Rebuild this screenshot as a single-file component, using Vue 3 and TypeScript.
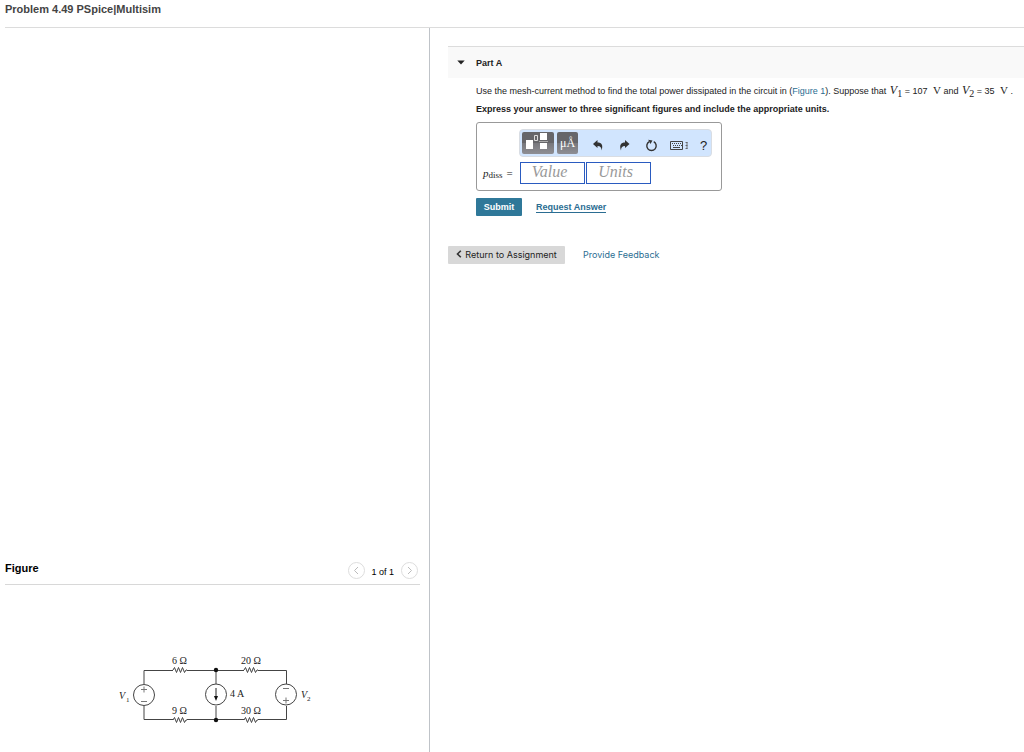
<script setup lang="ts">
import { ref } from 'vue'

interface Label {
  text: string
  x: number
  y: number
}

interface Point {
  x: number
  y: number
}

const open = ref(true)
const value = ref('')
const units = ref('')

const labels: Label[] = [
  { text: '6 Ω', x: 62, y: 19 },
  { text: '20 Ω', x: 131, y: 19 },
  { text: '9 Ω', x: 62, y: 69 },
  { text: '30 Ω', x: 131, y: 69 },
  { text: '4 A', x: 120, y: 52 },
]

const resistors: Point[] = [
  { x: 63, y: 25 },
  { x: 134, y: 25 },
  { x: 63, y: 75 },
  { x: 134, y: 75 },
]

const nodes: Point[] = [
  { x: 106, y: 25 },
  { x: 106, y: 75 },
]
</script>

<template>
  <div class="page">
    <header class="top">
      <h1>Problem 4.49 PSpice|Multisim</h1>
    </header>
    <div class="columns">
      <aside class="left">
        <div class="figure-head">
          <h2>Figure</h2>
          <div class="pager">
            <button type="button" class="round" aria-label="Previous figure">
              <svg width="17" height="17" viewBox="0 0 17 17"><circle cx="8.5" cy="8.5" r="8" /><path d="M10 5 6.5 8.5 10 12" /></svg>
            </button>
            <span>1 of 1</span>
            <button type="button" class="round" aria-label="Next figure">
              <svg width="17" height="17" viewBox="0 0 17 17"><circle cx="8.5" cy="8.5" r="8" /><path d="M7 5 10.5 8.5 7 12" /></svg>
            </button>
          </div>
        </div>
        <div class="figure-body">
          <svg class="circuit" width="210" height="85" viewBox="0 0 210 85" role="img" aria-label="Circuit diagram">
            <path class="wire" d="M34 39V25.5H63M77 25.5H134M148 25.5H176.5V39M34 61V74.5H63M77 74.5H134M148 74.5H176.5V61M106 25.5V39M106 61V74.5" />
            <path
              v-for="r in resistors"
              :key="`${r.x}-${r.y}`"
              class="wire"
              :transform="`translate(${r.x} ${r.y})`"
              d="M0 0 1.5-2.5 3.5 2.5 5.5-2.5 7.5 2.5 9.5-2.5 11.5 2.5 13 0H14"
            />
            <circle v-for="n in nodes" :key="n.y" :cx="n.x" :cy="n.y" r="2.2" class="node" />
            <circle cx="34" cy="50" r="10.5" class="source" />
            <circle cx="106" cy="49.5" r="10.5" class="source" />
            <circle cx="176" cy="49.5" r="10.5" class="source" />
            <path class="sign" d="M31 44.5H37M34 41.5V47.5M31 56.5H37M173 43.5H179M173 55.5H179M176 52.5V58.5" />
            <path class="sign dark" d="M106 43V53" />
            <path class="node" d="M104 51H108L106 56Z" />
            <text v-for="l in labels" :key="l.text" :x="l.x" :y="l.y">{{ l.text }}</text>
            <text x="9" y="54" class="var">V</text>
            <text x="16" y="57" class="sub">1</text>
            <text x="191" y="53" class="var">V</text>
            <text x="197" y="56" class="sub">2</text>
          </svg>
        </div>
      </aside>

      <main class="right">
        <div class="part-head">
          <button type="button" class="caret" aria-label="Toggle Part A" :aria-expanded="open" @click="open = !open">
            <svg width="8" height="5" viewBox="0 0 8 5"><path d="M.3 .5H7.7L4 4.500Z" fill="#222" /></svg>
          </button>
          <h2>Part A</h2>
        </div>
        <section v-if="open" class="part">
          <p class="question">
            Use the mesh-current method to find the total power dissipated in the circuit in (<a href="#">Figure 1</a>). Suppose that
            <span class="math">V<sub>1</sub></span> = 107 <span class="unit">V</span> and
            <span class="math">V<sub>2</sub></span> = 35 <span class="unit">V</span> .
          </p>
          <p class="instruction">Express your answer to three significant figures and include the appropriate units.</p>

          <form class="answer" @submit.prevent>
            <div class="box">
              <div class="toolbar">
                <button type="button" class="tool wide" aria-label="Templates">
                  <svg width="32" height="22" viewBox="0 0 32 22">
                    <path d="M4 8H11V17H4ZM18 1H25V8H18ZM18 11H25V17H18Z" fill="#fff" />
                    <path d="M12.5 3.5H15.5V8.5H12.5Z" fill="none" stroke="#ddd" />
                    <path d="M17 9.5H26" stroke="#aaa" />
                  </svg>
                </button>
                <button type="button" class="tool symbols" aria-label="Symbols">μÅ</button>
                <button type="button" class="icon" aria-label="Undo">
                  <svg width="11" height="11" viewBox="0 0 11 11"><path d="M0 4 4.5 0V2.5C8.5 2.5 10.5 5 8.5 10.5 8.5 7.5 7.5 6 4.5 6V8Z" fill="#333" /></svg>
                </button>
                <button type="button" class="icon" aria-label="Redo">
                  <svg width="11" height="11" viewBox="0 0 11 11"><path d="M10.5 4 6 0V2.5C2 2.5 0 5 2 10.5 2 7.5 3 6 6 6V8Z" fill="#333" /></svg>
                </button>
                <button type="button" class="icon" aria-label="Reset">
                  <svg width="13" height="13" viewBox="0 0 13 13"><path d="M8.7 2.7A4.7 4.7 0 1 1 4.3 2.7" fill="none" stroke="#333" stroke-width="1.4" /><path d="M3.2 .8 7.5 1.5 5.5 5Z" fill="#333" /></svg>
                </button>
                <button type="button" class="icon keys" aria-label="Keyboard shortcuts">
                  <svg width="19" height="9" viewBox="0 0 19 9">
                    <path d="M.5 .5H12.5V8.5H.5Z" fill="none" stroke="#444" />
                    <path d="M2 2.5H12M3 4.5H12" stroke="#444" stroke-dasharray="1 1" />
                    <path d="M3 6.5H10" stroke="#444" />
                    <path d="M15.5 1.5H17.5M15.5 4.5H17.5M15.5 7.5H17.5M17 1V8" stroke="#555" stroke-width=".8" fill="none" />
                  </svg>
                </button>
                <button type="button" class="icon help" aria-label="Help">?</button>
              </div>
              <div class="entry">
                <label for="value" class="pdiss"><i>p</i><sub>diss</sub><span>=</span></label>
                <input id="value" v-model="value" type="text" placeholder="Value" />
                <input id="units" v-model="units" type="text" placeholder="Units" aria-label="Units" />
              </div>
            </div>
            <div class="actions">
              <button type="submit" class="submit">Submit</button>
              <a href="#" class="request">Request Answer</a>
            </div>
          </form>
        </section>
        <footer class="bottom">
          <button type="button" class="return">
            <svg width="6" height="8" viewBox="0 0 6 8"><path d="M4.8 .7 1.5 4 4.8 7.3" fill="none" stroke="#333" stroke-width="1.6" /></svg>
            Return to Assignment
          </button>
          <a href="#">Provide Feedback</a>
        </footer>
      </main>
    </div>
  </div>
</template>

<style>
body {
  background: #fff;
}
</style>

<style scoped>
.page {
  display: flex;
  flex-direction: column;
  min-height: 100vh;
  overflow-x: hidden;
  color: #222;
  font-family: "Liberation Sans", Arial, sans-serif;
  font-size: 9px;
}
h1,
h2,
p {
  margin: 0;
}
button {
  margin: 0;
  padding: 0;
  border: 0;
  background: none;
  color: inherit;
  font: inherit;
  cursor: pointer;
}
svg {
  display: block;
}
a {
  color: #2b6d92;
  text-decoration: none;
}
.top {
  margin-left: 5px;
  padding: 2px 0 11px;
  border-bottom: 1px solid #dcdcdc;
}
h1 {
  color: #444;
  font-size: 11px;
  line-height: 14px;
}
.columns {
  display: flex;
  flex: 1;
}
.left {
  display: flex;
  flex: 0 0 42%;
  flex-direction: column;
  justify-content: flex-end;
  box-sizing: border-box;
  padding: 0 9px 22px 5px;
  border-right: 1px solid #bfc3c8;
}
.figure-head {
  display: flex;
  justify-content: space-between;
  padding-bottom: 5px;
  border-bottom: 1px solid #d8d8d8;
}
.figure-head h2 {
  color: #000;
  font-size: 11px;
  line-height: 12px;
}
.pager {
  display: flex;
  align-items: center;
  gap: 7px;
  padding-right: 2px;
}
.pager span {
  padding-top: 3px;
  color: #000;
  line-height: 14px;
}
.round circle {
  fill: #fff;
  stroke: #ddd;
}
.round path {
  fill: none;
  stroke: #bbb;
}
.figure-body {
  padding: 60px 0 0 105px;
}
.circuit {
  font-family: "Liberation Serif", "Times New Roman", serif;
  font-size: 10px;
  fill: #222;
}
.wire,
.source {
  fill: none;
  stroke: #444;
}
.sign {
  fill: none;
  stroke: #777;
}
.dark {
  stroke: #222;
}
.node {
  fill: #111;
}
.var {
  font-style: italic;
}
.sub {
  font-size: 7px;
}
.right {
  flex: 1;
  min-width: 0;
  padding: 18px 0 0 18px;
}
.part-head {
  display: flex;
  align-items: center;
  gap: 11px;
  height: 31px;
  padding-left: 9px;
  border-top: 1px solid #dcdcdc;
  background: #f9f9f9;
}
.part-head h2 {
  font-size: 9px;
}
.part {
  padding: 4px 0 0 28px;
}
.question {
  line-height: 18px;
  white-space: nowrap;
}
.instruction {
  font-weight: bold;
  line-height: 18px;
}
.math,
.unit {
  font-family: "Liberation Serif", "Times New Roman", serif;
  font-size: 11px;
  line-height: 10px;
}
.math {
  margin-left: 1px;
  font-size: 12px;
  font-style: italic;
}
.math sub {
  font-size: 10px;
  font-style: normal;
  line-height: 0;
}
.unit {
  margin-left: 3px;
}
.box {
  box-sizing: border-box;
  width: 246px;
  height: 69px;
  margin-top: 4px;
  padding: 6px;
  border: 1px solid #999;
  border-radius: 3px;
}
.toolbar {
  display: flex;
  align-items: center;
  box-sizing: border-box;
  height: 28px;
  margin: 0 3px 0 36px;
  padding: 0 2px;
  border: 1px solid #d9dde3;
  border-radius: 4px;
  background: #d1e5fe;
}
.tool {
  height: 22px;
  border-radius: 2px;
  background: linear-gradient(#66666a 50%, #77777c 50%, #8e8e94);
  color: #fff;
}
.wide {
  width: 32px;
}
.symbols {
  width: 21px;
  margin-left: 3px;
  font-family: "Liberation Serif", "Times New Roman", serif;
  font-size: 12px;
}
.icon {
  margin-left: 15px;
  padding-top: 4px;
}
.keys {
  margin-left: 12px;
}
.help {
  margin-left: 11px;
  font-size: 13px;
}
.entry {
  display: flex;
  align-items: center;
  gap: 1px;
  margin-top: 5px;
}
.pdiss {
  display: flex;
  align-items: center;
  width: 36px;
  font-family: "Liberation Serif", "Times New Roman", serif;
  font-size: 11px;
  line-height: 12px;
}
.pdiss sub {
  padding-top: 3px;
  font-size: 9px;
  vertical-align: baseline;
}
.pdiss span {
  margin-left: 4px;
}
input {
  box-sizing: border-box;
  width: 65px;
  height: 22px;
  padding: 0 6px 2px 0;
  border: 1px solid #2a5bc0;
  border-radius: 0;
  outline: 0;
  background: #fff;
  color: #222;
  font-family: "Liberation Serif", "Times New Roman", serif;
  font-size: 16px;
  font-style: italic;
  text-align: center;
}
input::placeholder {
  color: #999;
  opacity: 1;
}
.actions {
  display: flex;
  align-items: center;
  gap: 14px;
  margin-top: 7px;
}
.submit {
  width: 46px;
  height: 18px;
  border-radius: 1px;
  background: #2f7899;
  color: #fff;
  font-weight: bold;
}
.request {
  border-bottom: 1px solid #2b6d92;
  font-weight: bold;
  line-height: 10px;
}
.bottom {
  display: flex;
  align-items: center;
  gap: 18px;
  margin-top: 30px;
  font-family: Inter, "Liberation Sans", sans-serif;
}
.bottom > * {
  padding-bottom: 2px;
}
.return {
  display: flex;
  align-items: center;
  justify-content: center;
  gap: 3px;
  box-sizing: border-box;
  width: 117px;
  height: 18px;
  border-radius: 1px;
  background: #d8d8d8;
}
</style>
